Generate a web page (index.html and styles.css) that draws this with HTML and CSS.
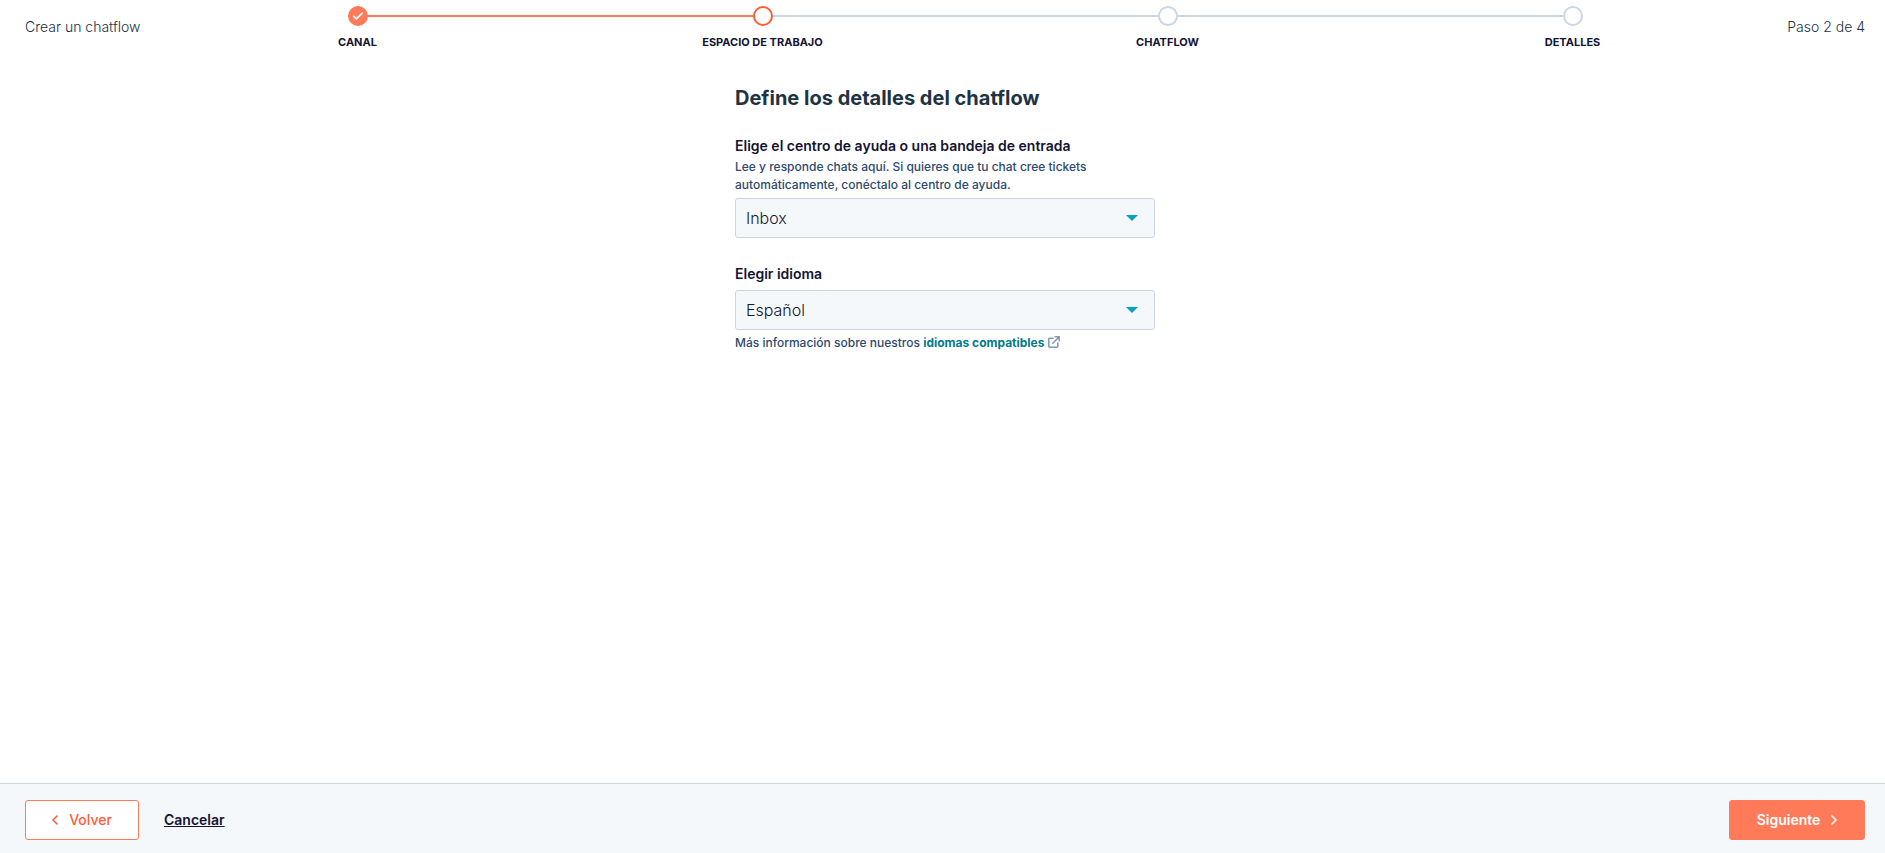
FILE: index.html
```html
<!DOCTYPE html>
<html lang="es">
<head>
  <meta charset="utf-8">
  <meta name="viewport" content="width=device-width, initial-scale=1">
  <title>Crear un chatflow</title>
  <link rel="stylesheet" href="styles.css">
</head>
<body>
  <header class="header">
    <div class="header-title">Crear un chatflow</div>
    <ol class="steps">
      <li class="step done">
        <div class="marker">
          <span class="circle">
            <svg width="12" height="12" viewBox="0 0 12 12" fill="none" stroke="#fff" stroke-width="1.7" stroke-linecap="round" stroke-linejoin="round"><path d="M1.8 6.3l2.6 2.6L10.2 3.1"/></svg>
          </span>
        </div>
        <div class="step-name">CANAL</div>
      </li>
      <li class="step current" aria-current="step">
        <div class="marker"><span class="circle"></span></div>
        <div class="step-name">ESPACIO DE TRABAJO</div>
      </li>
      <li class="step">
        <div class="marker"><span class="circle"></span></div>
        <div class="step-name">CHATFLOW</div>
      </li>
      <li class="step">
        <div class="marker"><span class="circle"></span></div>
        <div class="step-name">DETALLES</div>
      </li>
    </ol>
    <div class="header-count">Paso 2 de 4</div>
  </header>

  <main class="content">
    <form class="form" id="chatflowForm">
      <h1>Define los detalles del chatflow</h1>

      <div class="field">
        <label for="inbox">Elige el centro de ayuda o una bandeja de entrada</label>
        <p class="help">Lee y responde chats aquí. Si quieres que tu chat cree tickets<br>automáticamente, conéctalo al centro de ayuda.</p>
        <div class="select">
          <select id="inbox">
            <option>Inbox</option>
          </select>
        </div>
      </div>

      <div class="field">
        <label class="label-spaced" for="language">Elegir idioma</label>
        <div class="select">
          <select id="language">
            <option>Español</option>
          </select>
        </div>
        <p class="help help-below">Más información sobre nuestros <a href="#">idiomas compatibles</a>
          <svg class="external" width="12" height="12" viewBox="0 0 12 12" fill="none" stroke="#7c98b6" stroke-width="1.5" stroke-linecap="round" stroke-linejoin="round"><path d="M5 2.2H1.8a1 1 0 0 0-1 1v7a1 1 0 0 0 1 1h7a1 1 0 0 0 1-1V7M7.2.8h4v4M11 1L4.8 7.2"/></svg>
        </p>
      </div>
    </form>
  </main>

  <footer class="footer">
    <button type="button" class="btn btn-back">
      <svg width="6" height="10" viewBox="0 0 6 10" fill="none" stroke="currentColor" stroke-width="1.6" stroke-linecap="round" stroke-linejoin="round"><path d="M5 1L1 5l4 4"/></svg>
      Volver
    </button>
    <a class="cancel" href="#">Cancelar</a>
    <button type="submit" form="chatflowForm" class="btn btn-next">
      Siguiente
      <svg width="6" height="10" viewBox="0 0 6 10" fill="none" stroke="currentColor" stroke-width="1.6" stroke-linecap="round" stroke-linejoin="round"><path d="M1 1l4 4-4 4"/></svg>
    </button>
  </footer>
</body>
</html>
```
FILE: styles.css
```css
* {
  box-sizing: border-box;
}

body {
  margin: 0;
  min-height: 100vh;
  display: flex;
  flex-direction: column;
  background: #ffffff;
  color: #213343;
  font-family: Inter, "Open Sans", sans-serif;
  font-size: 14px;
  line-height: 18px;
}

/* header and stepper */

.header {
  display: flex;
  padding: 6px 20px 0 25px;
}

.header-title,
.header-count {
  padding-top: 12px;
  font-weight: 300;
  white-space: nowrap;
}

.header-title {
  width: 130px;
}

.header-count {
  width: 90px;
  text-align: right;
}

.steps {
  flex: 1;
  display: flex;
  margin: 0;
  padding: 0;
  list-style: none;
}

.step {
  flex: 1;
  text-align: center;
}

.marker {
  display: flex;
  align-items: center;
}

.marker::before,
.marker::after {
  content: "";
  flex: 1;
  height: 2px;
  background: #cbd6e2;
}

.done .marker::before,
.done .marker::after,
.current .marker::before {
  background: #ff7a59;
}

.step:first-child .marker::before,
.step:last-child .marker::after {
  background: transparent;
}

.circle {
  display: flex;
  align-items: center;
  justify-content: center;
  width: 20px;
  height: 20px;
  border: 2px solid #cbd6e2;
  border-radius: 50%;
}

.done .circle {
  border-color: #ff7a59;
  background: #ff7a59;
}

.current .circle {
  border-color: #ff5c35;
}

.step-name {
  margin-top: 7px;
  color: #141433;
  font-size: 11px;
  font-weight: 700;
}

/* form */

.content {
  flex: 1;
  padding: 35px 20px 30px 25px;
}

.form {
  max-width: 420px;
  margin: 0 auto;
}

h1 {
  margin: 0 0 27px;
  color: #213343;
  font-size: 20px;
  font-weight: 700;
  line-height: 24px;
}

.field {
  margin-bottom: 27px;
}

label {
  display: block;
  margin-bottom: 3px;
  color: #141433;
  font-weight: 600;
}

.label-spaced {
  margin-bottom: 7px;
}

.help {
  margin: 0 0 4px;
  color: #2d4a70;
  font-size: 12px;
  font-weight: 500;
  white-space: nowrap;
}

.help-below {
  margin: 4px 0 0;
}

.help a {
  color: #007a8c;
  font-weight: 700;
  text-decoration: none;
}

.external {
  vertical-align: -1px;
}

.select {
  position: relative;
}

.select::after {
  content: "";
  position: absolute;
  top: 17px;
  right: 17px;
  border: 6px solid transparent;
  border-top-color: #00a4bd;
  border-bottom: 0;
  pointer-events: none;
}

select {
  appearance: none;
  display: block;
  width: 100%;
  height: 40px;
  padding: 0 40px 0 10px;
  border: 1px solid #cbd6e2;
  border-radius: 3px;
  background: #f5f8fa;
  color: #141433;
  font-family: inherit;
  font-size: 16px;
  font-weight: 300;
}

/* footer */

.footer {
  display: flex;
  align-items: center;
  height: 70px;
  padding: 2px 20px 0 25px;
  border-top: 1px solid #cbd6e2;
  background: #f5f8fa;
}

.btn {
  display: flex;
  align-items: center;
  justify-content: center;
  gap: 11px;
  height: 40px;
  border: 1px solid #ff7a59;
  border-radius: 3px;
  font-family: inherit;
  font-size: 14px;
  cursor: pointer;
}

.btn-back {
  width: 114px;
  background: #ffffff;
  color: #ff5c35;
  font-weight: 500;
}

.btn-next {
  width: 136px;
  margin-left: auto;
  background: #ff7a59;
  color: #ffffff;
  font-weight: 600;
}

.cancel {
  margin-left: 25px;
  color: #141433;
  font-weight: 600;
}
```
